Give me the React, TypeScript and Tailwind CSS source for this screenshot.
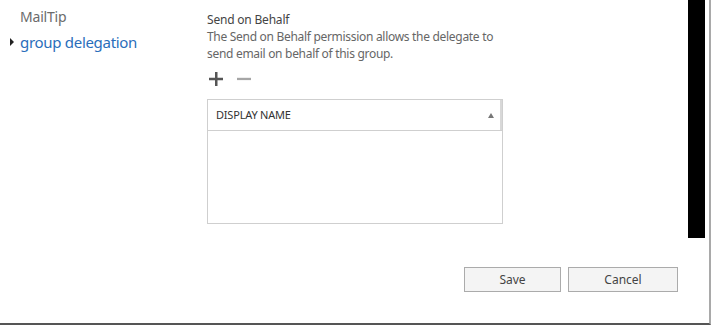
import React from "react";

const font = { fontFamily: '"Segoe UI", "Noto Sans", "Open Sans", sans-serif' };

export default function App() {
  return (
    <div
      className="relative h-[326px] w-[712px] overflow-hidden bg-white text-[#333]"
      style={font}
    >
      <div className="mr-[1px] flex h-[325px] border-r-2 border-b-2 border-r-[#a9a9a9] border-b-[#555]">
        {/* left nav */}
        <nav className="w-[207px] shrink-0 pt-[7px]">
          <div className="pl-[20px] text-[14px] leading-[20px] tracking-[-0.2px] text-[#6b6b6b]">MailTip</div>
          <div className="mt-[5px] flex items-center">
            <span className="ml-[10px] mr-[6px] h-0 w-0 border-y-[4px] border-l-[4px] border-y-transparent border-l-[#222]" />
            <span className="text-[15px] leading-[20px] tracking-[-0.3px] text-[#2a6ebb]">group delegation</span>
          </div>
        </nav>

        {/* main */}
        <main className="flex flex-1 flex-col pt-[11px]">
          <div className="text-[12px] leading-[17px] tracking-[-0.2px] text-[#444]">Send on Behalf</div>
          <p className="w-[300px] text-[12px] leading-[17px] tracking-[-0.3px] text-[#666]">
            The Send on Behalf permission allows the delegate to send email on behalf of this group.
          </p>
          <div className="mt-[10px] flex items-center gap-[14px] pl-[2px]">
            <svg width="14" height="14" viewBox="0 0 14 14">
              <path d="M6 0h2.5v14H6zM0 5.8h14v2.5H0z" fill="#555" />
            </svg>
            <svg width="14" height="14" viewBox="0 0 14 14">
              <path d="M0 5.8h14v2.3H0z" fill="#a6a6a6" />
            </svg>
          </div>

          <div className="mt-[13px] flex h-[125px] w-[296px] flex-col border border-[#cfcfcf]">
            <div className="flex h-[31px] items-center border-b border-[#cfcfcf]">
              <span className="flex-1 pl-[8px] text-[11px] tracking-[-0.2px] text-[#333]">DISPLAY NAME</span>
              <span className="mr-[6px] h-0 w-0 border-x-[3.5px] border-b-[5px] border-x-transparent border-b-[#777]" />
              <span className="h-full w-[2px] bg-[#d8d8d8]" />
            </div>
            <div className="flex-1" />
          </div>

          <div className="mt-auto mb-[31px] flex justify-end gap-[7px] pr-[10px]">
            <button className="h-[25px] w-[97px] border border-[#ababab] bg-[#f4f4f4] text-[12px] text-[#444]">
              Save
            </button>
            <button className="h-[25px] w-[110px] border border-[#ababab] bg-[#f4f4f4] text-[12px] text-[#444]">
              Cancel
            </button>
          </div>
        </main>

        {/* scrollbar */}
        <div className="mr-[4px] h-[238px] w-[17px] shrink-0 bg-black" />
      </div>
    </div>
  );
}
